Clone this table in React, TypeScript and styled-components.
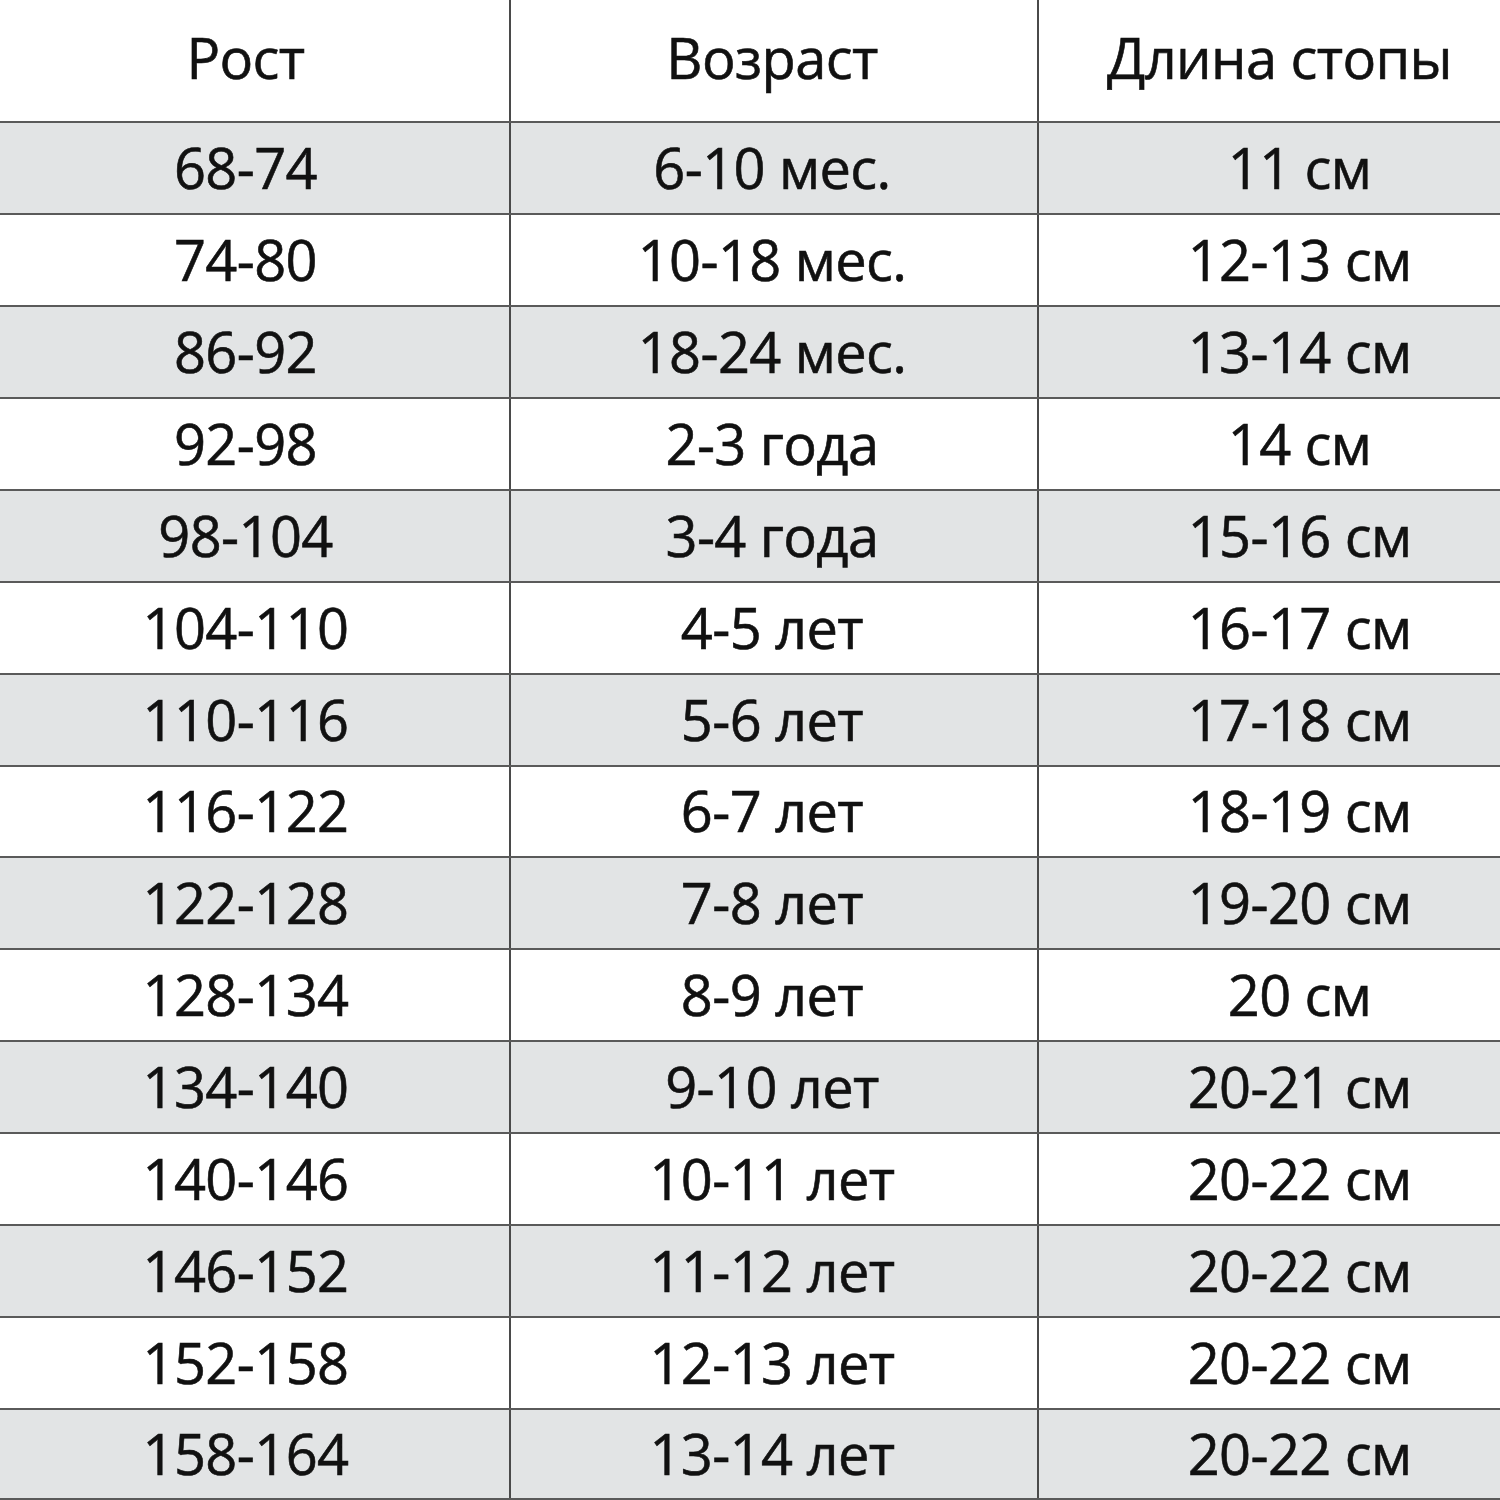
import React from "react";
import styled, { createGlobalStyle } from "styled-components";

const Global = createGlobalStyle`
  html, body { margin: 0; padding: 0; background: #ffffff; }
  body { font-family: "Open Sans", "Noto Sans", sans-serif; }
`;

const Table = styled.div`
  width: 1500px;
  height: 1500px;
  display: grid;
  grid-template-rows: 121px repeat(15, 1fr);
  background: #ffffff;
  box-sizing: border-box;
`;

const Row = styled.div<{ $shaded?: boolean; $header?: boolean; $last?: boolean }>`
  display: grid;
  grid-template-columns: 509px 528px 1fr;
  background: ${(p) => (p.$shaded ? "#e2e4e5" : "#ffffff")};
  border-top: ${(p) => (p.$header ? "none" : "2px solid #5a5a5a")};
  border-bottom: ${(p) => (p.$last ? "2px solid #5a5a5a" : "none")};
  box-sizing: border-box;
`;

const Cell = styled.div<{ $col: number; $header?: boolean }>`
  display: flex;
  align-items: center;
  justify-content: center;
  box-sizing: border-box;
  border-left: ${(p) => (p.$col === 0 ? "none" : "2px solid #4a4a4a")};
  padding-left: ${(p) => (p.$col === 2 ? (p.$header ? "20px" : "60px") : "0")};
  padding-right: ${(p) => (p.$col === 0 ? "18px" : p.$col === 1 ? "4px" : "0")};
  padding-bottom: ${(p) => (p.$header ? "8px" : "2px")};
  font-family: "Open Sans", "Noto Sans", sans-serif;
  font-weight: 400;
  font-size: 56px;
  letter-spacing: -0.6px;
  color: #111111;
  -webkit-text-stroke: 0.6px #111111;
  line-height: 1;
  white-space: nowrap;
`;

const rows: [string, string, string][] = [
  ["68-74", "6-10 мес.", "11 см"],
  ["74-80", "10-18 мес.", "12-13 см"],
  ["86-92", "18-24 мес.", "13-14 см"],
  ["92-98", "2-3 года", "14 см"],
  ["98-104", "3-4 года", "15-16 см"],
  ["104-110", "4-5 лет", "16-17 см"],
  ["110-116", "5-6 лет", "17-18 см"],
  ["116-122", "6-7 лет", "18-19 см"],
  ["122-128", "7-8 лет", "19-20 см"],
  ["128-134", "8-9 лет", "20 см"],
  ["134-140", "9-10 лет", "20-21 см"],
  ["140-146", "10-11 лет", "20-22 см"],
  ["146-152", "11-12 лет", "20-22 см"],
  ["152-158", "12-13 лет", "20-22 см"],
  ["158-164", "13-14 лет", "20-22 см"],
];

export default function App() {
  return (
    <>
      <Global />
      <Table>
        <Row $header>
          <Cell $col={0} $header>Рост</Cell>
          <Cell $col={1} $header>Возраст</Cell>
          <Cell $col={2} $header>Длина стопы</Cell>
        </Row>
        {rows.map((r, i) => (
          <Row key={i} $shaded={i % 2 === 0} $last={i === rows.length - 1}>
            <Cell $col={0}>{r[0]}</Cell>
            <Cell $col={1}>{r[1]}</Cell>
            <Cell $col={2}>{r[2]}</Cell>
          </Row>
        ))}
      </Table>
    </>
  );
}
